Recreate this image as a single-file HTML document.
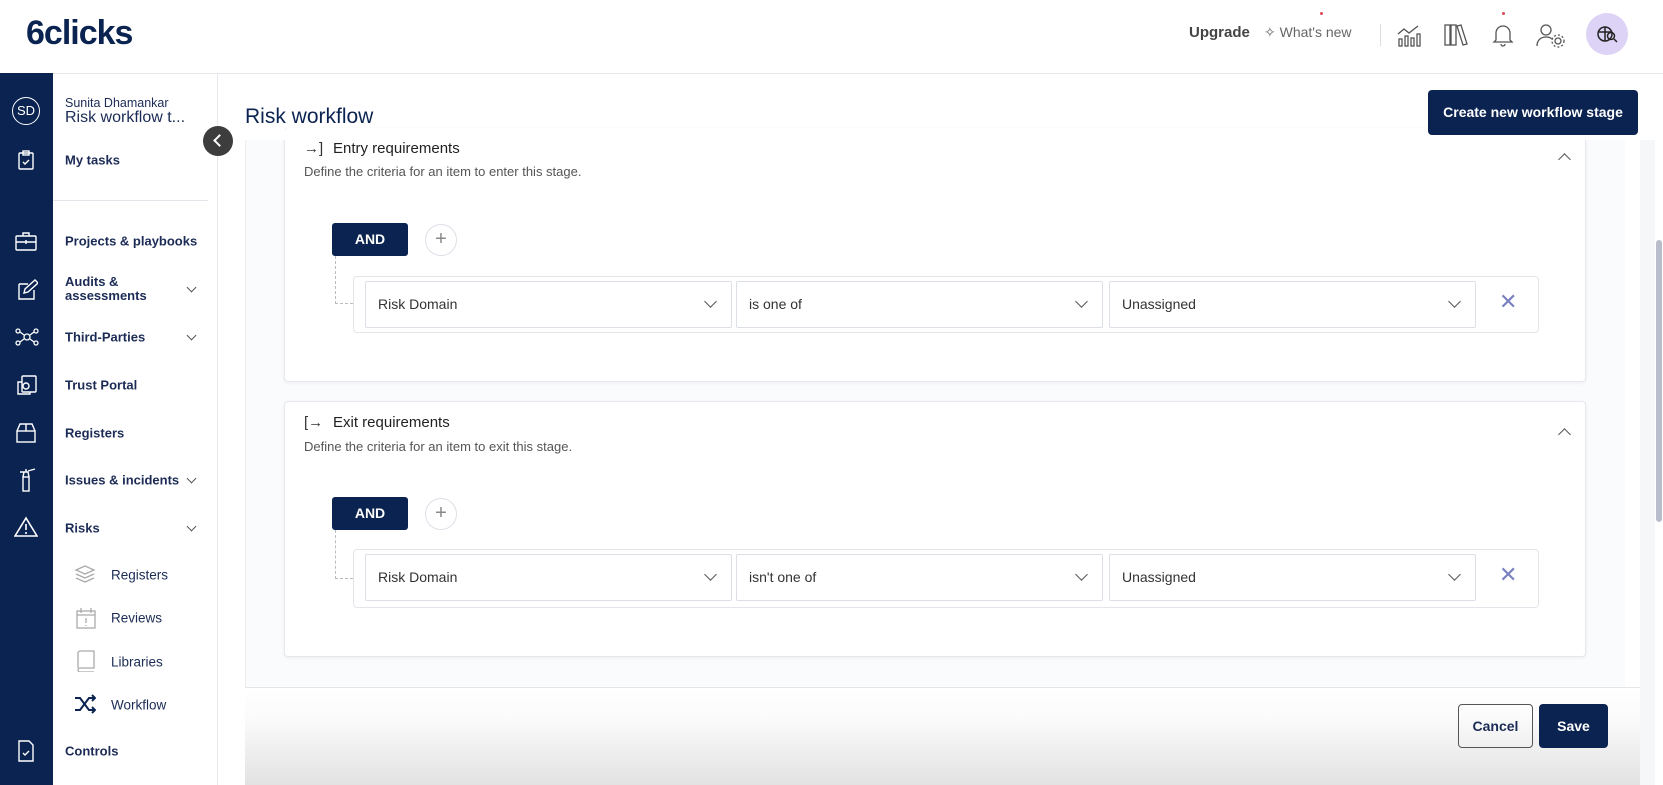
<!DOCTYPE html>
<html><head><meta charset="utf-8"><style>
*{box-sizing:border-box;margin:0;padding:0}
body{width:1663px;height:785px;overflow:hidden;font-family:"Liberation Sans",sans-serif;background:#fff;position:relative;color:#1f2a44}
.a{position:absolute}
.nav{left:0;top:73px;width:53px;height:712px;background:#0b2350}
.t{position:absolute;white-space:nowrap}
.ni{position:absolute;left:65px;font-size:13px;color:#1b2b55;font-weight:bold;transform:translateY(-50%)}
.si{position:absolute;left:111px;font-size:13.5px;color:#1b2b55;transform:translateY(-50%)}
.chev{position:absolute;left:188px;width:7px;height:7px;border-right:1.5px solid #555;border-bottom:1.5px solid #555;transform:rotate(45deg)}
.card{position:absolute;left:284px;width:1302px;background:#fff;border:1px solid #e6e8ee;border-radius:4px;box-shadow:0 1px 3px rgba(0,0,0,.06)}
.and{position:absolute;background:#0b2350;color:#fff;font-weight:bold;font-size:14px;border-radius:3px;text-align:center}
.plus{position:absolute;width:32px;height:32px;border:1px solid #dde0e6;border-radius:50%;text-align:center;line-height:29px;color:#888;font-size:20px}
.row{position:absolute;left:353px;width:1186px;border:1px solid #e3e5ea;border-radius:4px}
.sel{position:absolute;top:4px;height:47px;border:1px solid #dcdfe5;border-radius:2px;font-size:14px;color:#333;padding-left:12px;line-height:45px}
.sel:after{content:"";position:absolute;right:16px;top:15px;width:8px;height:8px;border-right:1.6px solid #555;border-bottom:1.6px solid #555;transform:rotate(45deg)}
.x{position:absolute;left:1145px;top:12px;font-size:22px;color:#7a80c0}
.dash{position:absolute;border-left:1px dashed #bbb;border-bottom:1px dashed #bbb}
.up{position:absolute;width:9px;height:9px;border-left:1.6px solid #555;border-top:1.6px solid #555;transform:rotate(45deg)}
</style></head><body>
<!-- header -->
<div class="t" style="left:26px;top:14px;font-size:34px;font-weight:bold;color:#0b2350;letter-spacing:-1px">6clicks</div>
<div class="a" style="left:0;top:73px;width:1663px;height:1px;background:#e4e6ea"></div>
<div class="t" style="left:1189px;top:24px;font-size:15px;font-weight:bold;color:#444">Upgrade</div>
<div class="t" style="left:1264px;top:24px;font-size:14px;color:#666">✧ What's new</div>
<div class="a" style="left:1320px;top:12px;width:3px;height:3px;border-radius:50%;background:#e0485a"></div>
<div class="a" style="left:1380px;top:24px;width:1px;height:22px;background:#ddd"></div>
<svg class="a" style="left:1396px;top:22px" width="26" height="26" viewBox="0 0 26 26" fill="none" stroke="#555" stroke-width="1.3"><path d="M2 12l6-5 5 4 9-7"/><rect x="3" y="17" width="3" height="7"/><rect x="9" y="14" width="3" height="10"/><rect x="15" y="16" width="3" height="8"/><rect x="21" y="12" width="3" height="12"/></svg>
<svg class="a" style="left:1443px;top:22px" width="26" height="26" viewBox="0 0 26 26" fill="none" stroke="#555" stroke-width="1.3"><rect x="2" y="3" width="5" height="20"/><rect x="8" y="3" width="5" height="20"/><path d="M14 4l4-1 6 19-4 1z"/></svg>
<svg class="a" style="left:1491px;top:22px" width="24" height="26" viewBox="0 0 24 26" fill="none" stroke="#555" stroke-width="1.3"><path d="M5 18V11a7 7 0 0 1 14 0v7l2 2H3z"/><path d="M10 22a2 2 0 0 0 4 0"/></svg>
<div class="a" style="left:1502px;top:12px;width:3px;height:3px;border-radius:50%;background:#e0485a"></div>
<svg class="a" style="left:1536px;top:22px" width="30" height="26" viewBox="0 0 30 26" fill="none" stroke="#555" stroke-width="1.3"><circle cx="10" cy="8" r="5"/><path d="M1 24c0-6 4-9 9-9 3 0 5 1 6 2"/><circle cx="22" cy="19" r="3"/><circle cx="22" cy="19" r="6" stroke-dasharray="2 2"/></svg>
<div class="a" style="left:1586px;top:13px;width:42px;height:42px;border-radius:50%;background:#dcd3f6"></div>
<svg class="a" style="left:1596px;top:23px" width="24" height="22" viewBox="0 0 24 22" fill="none" stroke="#222" stroke-width="1.5"><circle cx="9" cy="11" r="7"/><path d="M9 4v14M3 9h12"/><circle cx="15" cy="13" r="3.5"/><path d="M18 16l3 3"/></svg>
<!-- left nav -->
<div class="a nav"></div>
<div class="a" style="left:12px;top:97px;width:28px;height:28px;border:1.5px solid #fff;border-radius:50%;color:#fff;font-size:13px;text-align:center;line-height:25px">SD</div>
<svg class="a" style="left:17px;top:150px" width="18" height="20" viewBox="0 0 18 20" fill="none" stroke="#fff" stroke-width="1.4"><rect x="2" y="3" width="14" height="16" rx="1"/><rect x="6" y="1" width="6" height="4"/><path d="M6 12l2 2 4-4"/></svg>
<svg class="a" style="left:15px;top:231px" width="22" height="20" viewBox="0 0 22 20" fill="none" stroke="#fff" stroke-width="1.4"><rect x="1" y="5" width="20" height="14" rx="1"/><path d="M8 5V2h6v3M1 11h20M11 9v4"/></svg>
<svg class="a" style="left:16px;top:279px" width="22" height="22" viewBox="0 0 22 22" fill="none" stroke="#fff" stroke-width="1.4"><path d="M3 5h9M3 5v15h15V11M8 14l1-4 10-9 3 3-10 9z"/></svg>
<svg class="a" style="left:15px;top:327px" width="24" height="20" viewBox="0 0 24 20" fill="none" stroke="#fff" stroke-width="1.3"><circle cx="12" cy="10" r="3"/><circle cx="3" cy="4" r="2"/><circle cx="21" cy="4" r="2"/><circle cx="3" cy="16" r="2"/><circle cx="21" cy="16" r="2"/><path d="M5 5l4 3M19 5l-4 3M5 15l4-3M19 15l-4-3"/></svg>
<svg class="a" style="left:16px;top:374px" width="22" height="22" viewBox="0 0 22 22" fill="none" stroke="#fff" stroke-width="1.4"><rect x="6" y="2" width="14" height="16" rx="1"/><path d="M6 8H2v12h12v-2"/><circle cx="10" cy="12" r="3"/></svg>
<svg class="a" style="left:15px;top:422px" width="22" height="22" viewBox="0 0 22 22" fill="none" stroke="#fff" stroke-width="1.4"><rect x="2" y="9" width="18" height="11"/><path d="M2 9l3-7h12l3 7M11 2v7"/></svg>
<svg class="a" style="left:17px;top:468px" width="20" height="24" viewBox="0 0 20 24" fill="none" stroke="#fff" stroke-width="1.4"><rect x="6" y="9" width="6" height="14"/><path d="M6 9l1-5h4l1 5M9 4V1M11 3l7-2M3 4h4"/></svg>
<svg class="a" style="left:14px;top:516px" width="24" height="22" viewBox="0 0 24 22" fill="none" stroke="#fff" stroke-width="1.6"><path d="M12 2L1 20h22z"/><path d="M12 8v6M12 16v2"/></svg>
<svg class="a" style="left:17px;top:740px" width="18" height="22" viewBox="0 0 18 22" fill="none" stroke="#fff" stroke-width="1.4"><path d="M2 1h10l4 4v16H2z"/><path d="M6 13l2 2 4-4"/></svg>

<div class="a" style="left:217px;top:74px;width:1px;height:711px;background:#e6e8ec"></div>
<div class="t" style="left:65px;top:96px;font-size:12.5px;color:#1b2b55">Sunita Dhamankar</div>
<div class="t" style="left:65px;top:109px;font-size:16px;color:#1b2b55">Risk workflow t...</div>
<div class="ni" style="top:160px;font-weight:bold">My tasks</div>
<div class="a" style="left:53px;top:200px;width:155px;height:1px;background:#e3e5ea"></div>
<div class="ni" style="top:241px">Projects &amp; playbooks</div>
<div class="ni" style="top:289px;line-height:14px">Audits &amp;<br>assessments</div><div class="chev" style="top:284px"></div>
<div class="ni" style="top:337px">Third-Parties</div><div class="chev" style="top:332px"></div>
<div class="ni" style="top:385px">Trust Portal</div>
<div class="ni" style="top:433px">Registers</div>
<div class="ni" style="top:480px">Issues &amp; incidents</div><div class="chev" style="top:475px"></div>
<div class="ni" style="top:528px">Risks</div><div class="chev" style="top:523px"></div>
<svg class="a" style="left:74px;top:564px" width="22" height="22" viewBox="0 0 22 22" fill="none" stroke="#aaa" stroke-width="1.3"><path d="M11 2l9 4-9 4-9-4zM2 10l9 4 9-4M2 14l9 4 9-4"/></svg>
<div class="si" style="top:575px">Registers</div>
<svg class="a" style="left:76px;top:607px" width="20" height="22" viewBox="0 0 20 22" fill="none" stroke="#aaa" stroke-width="1.3"><rect x="1" y="4" width="18" height="17"/><path d="M5 1v5M15 1v5M1 8h18M10 11v5M10 18v1"/></svg>
<div class="si" style="top:618px">Reviews</div>
<svg class="a" style="left:76px;top:650px" width="20" height="22" viewBox="0 0 20 22" fill="none" stroke="#aaa" stroke-width="1.3"><path d="M2 18V3a2 2 0 0 1 2-2h14v17H4a2 2 0 0 0 0 4h14"/></svg>
<div class="si" style="top:662px">Libraries</div>
<svg class="a" style="left:74px;top:694px" width="22" height="20" viewBox="0 0 22 20" fill="none" stroke="#0b2350" stroke-width="2"><path d="M1 4h5l9 12h6M1 16h5l9-12h6M18 1l3 3-3 3M18 13l3 3-3 3"/></svg>
<div class="si" style="top:705px">Workflow</div>
<div class="ni" style="top:751px">Controls</div>

<!-- main -->
<div class="a" style="left:245px;top:140px;width:1380px;height:548px;background:#fafbfc;border-left:1px solid #eee"></div>
<div class="a" style="left:1640px;top:140px;width:15px;height:645px;background:#f6f7f9"></div>
<div class="a" style="left:1656px;top:240px;width:6px;height:282px;background:#b8bccb;border-radius:3px"></div>

<div class="card" style="top:128px;height:254px;border-top:none"></div>
<div class="card" style="top:401px;height:256px"></div>
<div class="a" style="left:245px;top:130px;width:1380px;height:10px;background:#fff"></div>
<div class="t" style="left:245px;top:105px;font-size:21px;color:#0b2350">Risk workflow</div>
<div class="a" style="left:1428px;top:90px;width:210px;height:45px;background:#0b2350;border-radius:4px;color:#fff;font-weight:bold;font-size:14px;text-align:center;line-height:45px">Create new workflow stage</div>

<!-- entry -->
<div class="t" style="left:304px;top:140px;font-size:15px;color:#333">→]</div>
<div class="t" style="left:333px;top:140px;font-size:15px;color:#222">Entry requirements</div>
<div class="t" style="left:304px;top:164px;font-size:13px;color:#555">Define the criteria for an item to enter this stage.</div>
<div class="up" style="left:1560px;top:155px"></div>
<div class="and" style="left:332px;top:223px;width:76px;height:33px;line-height:33px">AND</div>
<div class="plus" style="left:425px;top:224px">+</div>
<div class="dash" style="left:335px;top:256px;width:18px;height:48px"></div>
<div class="row" style="top:276px;height:57px">
 <div class="sel" style="left:11px;width:367px">Risk Domain</div>
 <div class="sel" style="left:382px;width:367px">is one of</div>
 <div class="sel" style="left:755px;width:367px">Unassigned</div>
 <div class="x">✕</div>
</div>

<!-- exit -->
<div class="t" style="left:304px;top:414px;font-size:15px;color:#333">[→</div>
<div class="t" style="left:333px;top:414px;font-size:15px;color:#222">Exit requirements</div>
<div class="t" style="left:304px;top:439px;font-size:13px;color:#555">Define the criteria for an item to exit this stage.</div>
<div class="up" style="left:1560px;top:430px"></div>
<div class="and" style="left:332px;top:497px;width:76px;height:33px;line-height:33px">AND</div>
<div class="plus" style="left:425px;top:498px">+</div>
<div class="dash" style="left:335px;top:530px;width:18px;height:49px"></div>
<div class="row" style="top:549px;height:59px">
 <div class="sel" style="left:11px;width:367px">Risk Domain</div>
 <div class="sel" style="left:382px;width:367px">isn't one of</div>
 <div class="sel" style="left:755px;width:367px">Unassigned</div>
 <div class="x">✕</div>
</div>

<!-- footer -->
<div class="a" style="left:245px;top:687px;width:1395px;height:98px;background:linear-gradient(#fff,#fbfbfb 30%,#e2e2e2);border-top:1px solid #e4e6ea"></div>
<div class="a" style="left:1458px;top:704px;width:75px;height:44px;border:1px solid #555;border-radius:4px;font-size:14px;font-weight:bold;color:#1b2b55;text-align:center;line-height:42px">Cancel</div>
<div class="a" style="left:1539px;top:704px;width:69px;height:44px;background:#0b2350;border-radius:4px;font-size:14px;font-weight:bold;color:#fff;text-align:center;line-height:44px">Save</div>

<div class="a" style="left:203px;top:126px;width:30px;height:30px;border-radius:50%;background:#3d3d3d"></div>
<div class="a" style="left:215px;top:136px;width:9px;height:9px;border-left:2px solid #fff;border-bottom:2px solid #fff;transform:rotate(45deg)"></div>
</body></html>
